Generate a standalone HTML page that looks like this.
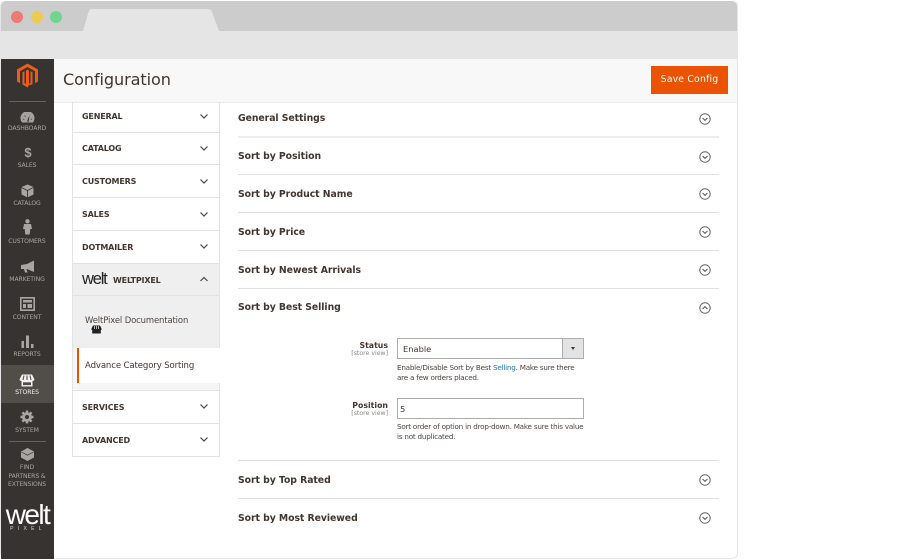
<!DOCTYPE html>
<html><head><meta charset="utf-8"><style>
html,body{margin:0;padding:0;background:#fff;width:903px;height:559px;overflow:hidden}
*{box-sizing:border-box}
body{font-family:"DejaVu Sans","Liberation Sans",sans-serif;position:relative}
.a{position:absolute;white-space:nowrap}
.nav{position:absolute;left:0;width:54px;text-align:center;font-size:6.1px;color:#aaa6a0;letter-spacing:-.1px;line-height:8px}
.sec{position:absolute;left:82px;font-size:8px;font-weight:bold;color:#41362f;letter-spacing:-.17px;line-height:10px}
.sl{position:absolute;left:72px;width:148px;height:1px;background:#e3e3e3}
.ch{position:absolute;left:199px;width:10px;height:7px}
.h{position:absolute;left:238px;font-size:9.3px;font-weight:bold;color:#41362f;line-height:12px;letter-spacing:-.05px}
.hl{position:absolute;left:238px;width:481px;height:1px;background:#e0e0e0}
.c{position:absolute;left:699px;width:12px;height:12px}
.lab{position:absolute;right:515px;font-size:7.8px;font-weight:bold;color:#41362f;line-height:11px}
.sv{position:absolute;right:515px;font-size:6.2px;color:#8a8a8a;line-height:8px}
.note{position:absolute;left:397px;font-size:7.2px;color:#4f4640;line-height:10.5px;letter-spacing:-.22px;white-space:nowrap}
</style></head><body>
<!-- browser frame -->
<div class="a" style="left:0;top:0;width:738px;height:559px;background:#fff;border:1px solid #e6e6e6;border-top:0;border-radius:6px"></div>
<div class="a" style="left:1px;top:1px;width:736px;height:30px;background:#cccccc;border-radius:5px 5px 0 0"></div>
<div class="a" style="left:1px;top:31px;width:736px;height:28px;background:#e5e5e5"></div>
<svg class="a" style="left:80px;top:8px" width="142" height="24"><path d="M3 23 L8.5 4 Q9.5 1 12 1 L128 1 Q131 1 132 4 L139 23 Z" fill="#e5e5e5"/></svg>
<div class="a" style="left:11px;top:11px;width:12px;height:12px;border-radius:50%;background:#ec7a76"></div>
<div class="a" style="left:31px;top:11px;width:12px;height:12px;border-radius:50%;background:#eccb54"></div>
<div class="a" style="left:50px;top:11px;width:12px;height:12px;border-radius:50%;background:#6fd58e"></div>

<!-- sidebar -->
<div class="a" style="left:1px;top:59px;width:53px;height:500px;background:#373330"></div>
<div class="a" style="left:1px;top:365px;width:53px;height:38px;background:#514e4a"></div>
<svg class="a" style="left:16px;top:63px" width="23" height="25" viewBox="0 0 23 25"><path d="M11.5 0.5 L22 6.5 V18.5 L19 20.2 V8.3 L11.5 4 L4 8.3 V20.2 L1 18.5 V6.5 Z" fill="#ea5d1d"/><path d="M10 7.5 L11.5 6.7 L13 7.5 V22 L11.5 24.5 L6.5 21.5 V9.3 L8.5 8.2 V20 L10 20.8 Z M13 22 L16.5 21.5 V9.3 L14.5 8.2 V20 L13 20.8 Z" fill="#ea5d1d"/></svg>
<div class="a" style="left:9px;top:101px;width:37px;height:1px;background:#66625e"></div>
<div class="a" style="left:9px;top:441px;width:37px;height:1px;background:#66625e"></div>

<div class="nav" style="top:125px">DASHBOARD</div>
<svg class="a" style="left:20px;top:112px" width="15" height="11" viewBox="0 0 15 11"><path d="M2 10.5 A7 7 0 1 1 13 10.5 Z" fill="#a5a19c"/><path d="M7 9.5 L9.5 3 L8.7 9.8 Z" fill="#373330"/><path d="M3 7 L4.3 7.4 M4.6 3.6 L5.4 4.8 M11.9 7 L10.7 7.4" stroke="#373330" stroke-width=".7"/></svg>
<div class="nav" style="top:162px">SALES</div>
<div class="a" style="left:21px;top:145px;width:14px;text-align:center;font:bold 13px/16px 'Liberation Sans',sans-serif;color:#a9a6a1">$</div>
<div class="nav" style="top:200px">CATALOG</div>
<svg class="a" style="left:21px;top:184px" width="13" height="14" viewBox="0 0 13 14"><path d="M6.5 0.5 L12.5 3 V10.5 L6.5 13.5 L0.5 10.5 V3 Z" fill="#a9a6a1"/><path d="M0.5 3.5 L6.5 6.5 L12.5 3.5 M6.5 6.5 V13.5" stroke="#373330" stroke-width=".9" fill="none"/></svg>
<div class="nav" style="top:238px">CUSTOMERS</div>
<svg class="a" style="left:22px;top:219px" width="11" height="16" viewBox="0 0 11 16"><circle cx="5.5" cy="2.3" r="2.2" fill="#a9a6a1"/><path d="M2 5 H9 L10 10 H8.3 L7.7 15.5 H3.3 L2.7 10 H1 Z" fill="#a9a6a1"/></svg>
<div class="nav" style="top:276px">MARKETING</div>
<svg class="a" style="left:20px;top:260px" width="15" height="13" viewBox="0 0 15 13"><path d="M14 0.5 V12 L7 9 H1 V5 L7 4 Z" fill="#a9a6a1"/><path d="M4 9 H6.5 L7.5 12.5 H5 Z" fill="#a9a6a1"/></svg>
<div class="nav" style="top:314px">CONTENT</div>
<svg class="a" style="left:20px;top:297px" width="15" height="14" viewBox="0 0 15 14"><rect x=".8" y=".8" width="13.4" height="12.4" fill="none" stroke="#a9a6a1" stroke-width="1.6"/><path d="M3 3 H12 V5.5 H3 Z M3 7 H6 V11 H3 Z M7.5 7 H12 V11 H7.5 Z" fill="#a9a6a1"/></svg>
<div class="nav" style="top:351px">REPORTS</div>
<svg class="a" style="left:21px;top:335px" width="13" height="13" viewBox="0 0 13 13"><path d="M0.5 6 H3 V13 H0.5 Z M5 0.5 H8 V13 H5 Z M10 9 H12.5 V13 H10 Z" fill="#a9a6a1"/></svg>
<div class="nav" style="top:389px;color:#f2f2f2">STORES</div>
<svg class="a" style="left:19px;top:374px" width="16" height="13" viewBox="0 0 16 13"><path d="M3 0.5 H13 L15.5 5.5 Q15 7 13.5 7 V12.5 H2.5 V7 Q1 7 .5 5.5 Z" fill="#f2f2f2"/><path d="M5 1.5 L4 6 M8 1.5 V6 M11 1.5 L12 6" stroke="#514e4a" stroke-width="1.1"/><rect x="4" y="8.3" width="8" height="2.8" fill="#514e4a"/></svg>
<div class="nav" style="top:427px">SYSTEM</div>
<svg class="a" style="left:20px;top:410px" width="14" height="14" viewBox="0 0 14 14"><path d="M7 0.5 V13.5 M0.5 7 H13.5 M2.4 2.4 L11.6 11.6 M11.6 2.4 L2.4 11.6" stroke="#a9a6a1" stroke-width="2.4"/><circle cx="7" cy="7" r="3.6" fill="none" stroke="#a9a6a1" stroke-width="2.6"/><circle cx="7" cy="7" r="2" fill="#373330"/></svg>
<svg class="a" style="left:20px;top:447px" width="15" height="15" viewBox="0 0 15 15"><path d="M7.5 1 L14 4.5 V10.5 L7.5 14 L1 10.5 V4.5 Z" fill="#a9a6a1"/><path d="M1.5 5 L7.5 8.2 L13.5 5" stroke="#373330" stroke-width=".7" fill="none"/></svg>
<div class="nav" style="top:464px;line-height:8.6px">FIND<br>PARTNERS &amp;<br>EXTENSIONS</div>
<div class="a" style="left:3px;top:500px;width:49px;text-align:center;font:normal 28px/30px 'Liberation Sans',sans-serif;color:#fff;letter-spacing:-1.6px">welt</div>
<div class="a" style="left:5px;top:526px;width:46px;text-align:center;font:5px/6px 'Liberation Sans',sans-serif;color:#ddd;letter-spacing:4.3px">PIXEL</div>

<!-- header -->
<div class="a" style="left:54px;top:59px;width:683px;height:43px;background:#f8f8f8"></div>
<div class="a" style="left:54px;top:102px;width:683px;height:1px;background:#ececec"></div>
<div class="a" style="left:63px;top:68px;font-size:16.1px;line-height:24px;color:#41362f;letter-spacing:-.1px">Configuration</div>
<div class="a" style="left:651px;top:66px;width:77px;height:28px;background:#eb5202;color:#fff;font-size:9.3px;line-height:28px;text-align:center;letter-spacing:.2px">Save Config</div>

<!-- left menu -->
<div class="a" style="left:72px;top:102px;width:1px;height:355px;background:#e3e3e3"></div>
<div class="a" style="left:219px;top:102px;width:1px;height:355px;background:#e3e3e3"></div>
<div class="a" style="left:73px;top:264px;width:146px;height:84px;background:#efefef"></div>
<div class="a" style="left:73px;top:348px;width:4px;height:42px;background:#f7f7f7"></div>
<div class="a" style="left:77px;top:348px;width:143px;height:35px;background:#fff"></div>
<div class="a" style="left:77px;top:383px;width:142px;height:7px;background:#f5f5f5"></div>
<div class="a" style="left:77px;top:348px;width:2px;height:35px;background:#eb5202"></div>
<div class="sl" style="top:132px"></div><div class="sl" style="top:164px"></div><div class="sl" style="top:197px"></div><div class="sl" style="top:230px"></div><div class="sl" style="top:263px"></div><div class="sl" style="top:295px"></div><div class="sl" style="top:390px"></div><div class="sl" style="top:423px"></div><div class="sl" style="top:456px"></div>
<div class="sec" style="top:112px">GENERAL</div>
<div class="sec" style="top:144px">CATALOG</div>
<div class="sec" style="top:177px">CUSTOMERS</div>
<div class="sec" style="top:210px">SALES</div>
<div class="sec" style="top:243px">DOTMAILER</div>
<div class="sec" style="top:276px;left:113px">WELTPIXEL</div>
<div class="sec" style="top:403px">SERVICES</div>
<div class="sec" style="top:436px">ADVANCED</div>
<div class="a" style="left:82px;top:269px;font:normal 16.5px/20px 'Liberation Sans',sans-serif;color:#222;letter-spacing:-1.2px">welt</div>
<svg class="ch" style="top:113px" viewBox="0 0 10 7"><path d="M1.5 1.5 L5 5 L8.5 1.5" fill="none" stroke="#4b4540" stroke-width="1.2"/></svg>
<svg class="ch" style="top:145px" viewBox="0 0 10 7"><path d="M1.5 1.5 L5 5 L8.5 1.5" fill="none" stroke="#4b4540" stroke-width="1.2"/></svg>
<svg class="ch" style="top:178px" viewBox="0 0 10 7"><path d="M1.5 1.5 L5 5 L8.5 1.5" fill="none" stroke="#4b4540" stroke-width="1.2"/></svg>
<svg class="ch" style="top:211px" viewBox="0 0 10 7"><path d="M1.5 1.5 L5 5 L8.5 1.5" fill="none" stroke="#4b4540" stroke-width="1.2"/></svg>
<svg class="ch" style="top:243px" viewBox="0 0 10 7"><path d="M1.5 1.5 L5 5 L8.5 1.5" fill="none" stroke="#4b4540" stroke-width="1.2"/></svg>
<svg class="ch" style="top:276px" viewBox="0 0 10 7"><path d="M1.5 5 L5 1.5 L8.5 5" fill="none" stroke="#4b4540" stroke-width="1.2"/></svg>
<svg class="ch" style="top:403px" viewBox="0 0 10 7"><path d="M1.5 1.5 L5 5 L8.5 1.5" fill="none" stroke="#4b4540" stroke-width="1.2"/></svg>
<svg class="ch" style="top:436px" viewBox="0 0 10 7"><path d="M1.5 1.5 L5 5 L8.5 1.5" fill="none" stroke="#4b4540" stroke-width="1.2"/></svg>
<div class="a" style="left:85px;top:315px;font-size:8.45px;line-height:11px;color:#4f4640;letter-spacing:-.12px">WeltPixel Documentation</div>
<svg class="a" style="left:91px;top:325px" width="11" height="9" viewBox="0 0 11 9"><path d="M2 .5 H9 L10.5 3.5 V5 H9.8 V8.5 H1.2 V5 H.5 V3.5 Z" fill="#222"/><path d="M3.7 1 L3.3 4 M5.5 1 V4 M7.3 1 L7.7 4" stroke="#efefef" stroke-width=".7"/></svg>
<div class="a" style="left:85px;top:361px;font-size:8.55px;line-height:11px;color:#41362f;letter-spacing:-.12px">Advance Category Sorting</div>

<!-- right accordion -->
<div class="hl" style="top:136px;height:2px;background:#eeeeee"></div>
<div class="hl" style="top:174px"></div><div class="hl" style="top:212px"></div><div class="hl" style="top:250px"></div><div class="hl" style="top:288px"></div><div class="hl" style="top:460px"></div><div class="hl" style="top:498px"></div>
<div class="h" style="top:113px">General Settings</div>
<div class="h" style="top:151px">Sort by Position</div>
<div class="h" style="top:189px">Sort by Product Name</div>
<div class="h" style="top:227px">Sort by Price</div>
<div class="h" style="top:265px">Sort by Newest Arrivals</div>
<div class="h" style="top:302px">Sort by Best Selling</div>
<div class="h" style="top:475px">Sort by Top Rated</div>
<div class="h" style="top:513px">Sort by Most Reviewed</div>
<svg class="c" style="top:113px" viewBox="0 0 12 12"><circle cx="6" cy="6" r="5.2" fill="none" stroke="#6a6560"/><path d="M3.6 5 L6 7.4 L8.4 5" fill="none" stroke="#5a5550"/></svg>
<svg class="c" style="top:151px" viewBox="0 0 12 12"><circle cx="6" cy="6" r="5.2" fill="none" stroke="#6a6560"/><path d="M3.6 5 L6 7.4 L8.4 5" fill="none" stroke="#5a5550"/></svg>
<svg class="c" style="top:188px" viewBox="0 0 12 12"><circle cx="6" cy="6" r="5.2" fill="none" stroke="#6a6560"/><path d="M3.6 5 L6 7.4 L8.4 5" fill="none" stroke="#5a5550"/></svg>
<svg class="c" style="top:226px" viewBox="0 0 12 12"><circle cx="6" cy="6" r="5.2" fill="none" stroke="#6a6560"/><path d="M3.6 5 L6 7.4 L8.4 5" fill="none" stroke="#5a5550"/></svg>
<svg class="c" style="top:264px" viewBox="0 0 12 12"><circle cx="6" cy="6" r="5.2" fill="none" stroke="#6a6560"/><path d="M3.6 5 L6 7.4 L8.4 5" fill="none" stroke="#5a5550"/></svg>
<svg class="c" style="top:302px" viewBox="0 0 12 12"><circle cx="6" cy="6" r="5.2" fill="none" stroke="#6a6560"/><path d="M3.6 7 L6 4.6 L8.4 7" fill="none" stroke="#5a5550"/></svg>
<svg class="c" style="top:474px" viewBox="0 0 12 12"><circle cx="6" cy="6" r="5.2" fill="none" stroke="#6a6560"/><path d="M3.6 5 L6 7.4 L8.4 5" fill="none" stroke="#5a5550"/></svg>
<svg class="c" style="top:512px" viewBox="0 0 12 12"><circle cx="6" cy="6" r="5.2" fill="none" stroke="#6a6560"/><path d="M3.6 5 L6 7.4 L8.4 5" fill="none" stroke="#5a5550"/></svg>

<!-- form -->
<div class="lab" style="top:340px">Status</div>
<div class="sv" style="top:350px">[store view]</div>
<div class="a" style="left:397px;top:338px;width:187px;height:21px;background:#fff;border:1px solid #adadad;font-size:8.3px;line-height:21px;padding-left:5px;color:#41362f">Enable</div>
<div class="a" style="left:562px;top:339px;width:21px;height:19px;background:#e3e3e3;border-left:1px solid #adadad"></div>
<div class="a" style="left:571px;top:347px;width:0;height:0;border-left:2.5px solid transparent;border-right:2.5px solid transparent;border-top:3.5px solid #41362f"></div>
<div class="note" style="top:362.5px">Enable/Disable Sort by Best <span style="color:#1979c3">Selling</span>. Make sure there<br>are a few orders placed.</div>
<div class="lab" style="top:400px">Position</div>
<div class="sv" style="top:410px">[store view]</div>
<div class="a" style="left:397px;top:398px;width:187px;height:21px;background:#fff;border:1px solid #adadad;font-size:8.3px;line-height:21px;padding-left:2px;color:#41362f">5</div>
<div class="note" style="top:421.5px">Sort order of option in drop-down. Make sure this value<br>is not duplicated.</div>
</body></html>
